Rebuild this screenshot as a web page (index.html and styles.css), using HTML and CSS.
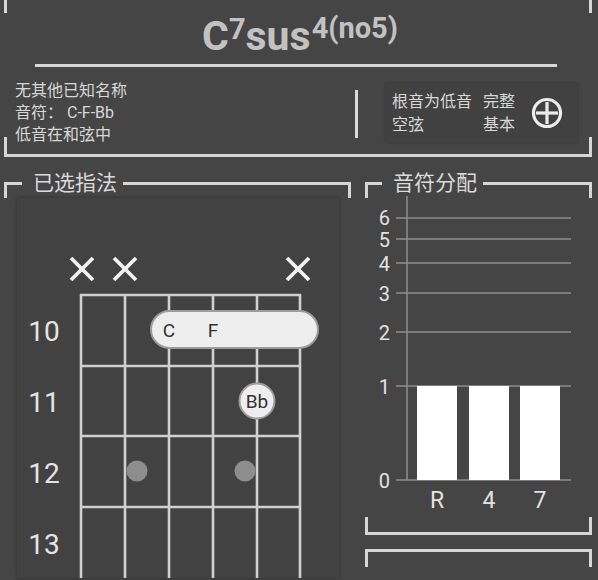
FILE: index.html
```html
<!DOCTYPE html>
<html lang="zh">
<head>
<meta charset="utf-8">
<link rel="stylesheet" href="styles.css">
</head>
<body>
<div class="stubs"></div>
<h1 class="title">C<sup class="sup7">7</sup>sus<sup class="sup4">4(no5)</sup></h1>
<div class="rule"></div>
<section class="info">
  <div class="info-text">
    <div>无其他已知名称</div>
    <div>音符： C-F-Bb</div>
    <div>低音在和弦中</div>
  </div>
  <div class="divider"></div>
  <div class="tags">
    <div class="tag-grid">
      <span>根音为低音</span><span>完整</span>
      <span>空弦</span><span>基本</span>
    </div>
    <svg class="plus" width="32" height="32" viewBox="0 0 32 32">
      <circle cx="16" cy="16" r="13.5" fill="none" stroke="#ececec" stroke-width="3.2"/>
      <line x1="5" y1="16" x2="27" y2="16" stroke="#ececec" stroke-width="3.2"/>
      <line x1="16" y1="5" x2="16" y2="27" stroke="#ececec" stroke-width="3.2"/>
    </svg>
  </div>
</section>
<div class="columns">
  <section class="col col-left">
    <div class="head">
      <div class="corner"></div>
      <span class="head-text">已选指法</span>
      <div class="head-line"></div>
    </div>
    <div class="board">
      <svg width="322" height="380" viewBox="17 200 322 380">
        <g stroke="#f2f2f2" stroke-width="3.8">
          <line x1="71" y1="260" x2="93" y2="282"/><line x1="93" y1="260" x2="71" y2="282"/>
          <line x1="114" y1="260" x2="136" y2="282"/><line x1="136" y1="260" x2="114" y2="282"/>
          <line x1="287" y1="260" x2="309" y2="282"/><line x1="309" y1="260" x2="287" y2="282"/>
        </g>
        <g stroke="#d0d0d0" stroke-width="2.6">
          <line x1="81" y1="296" x2="81" y2="590"/>
          <line x1="125" y1="296" x2="125" y2="590"/>
          <line x1="169" y1="296" x2="169" y2="590"/>
          <line x1="213" y1="296" x2="213" y2="590"/>
          <line x1="257" y1="296" x2="257" y2="590"/>
          <line x1="300" y1="296" x2="300" y2="590"/>
          <line x1="80" y1="297" x2="301" y2="297"/>
          <line x1="80" y1="368" x2="301" y2="368"/>
          <line x1="80" y1="438" x2="301" y2="438"/>
          <line x1="80" y1="509" x2="301" y2="509"/>
        </g>
        <g class="fretnum" fill="#e4e4e4" text-anchor="middle">
          <text x="44" y="343">10</text>
          <text x="44" y="414">11</text>
          <text x="44" y="485">12</text>
          <text x="44" y="556">13</text>
        </g>
        <circle cx="137" cy="473" r="10.5" fill="#8d8d8d"/>
        <circle cx="245" cy="473" r="10.5" fill="#8d8d8d"/>
        <rect x="151" y="313" width="167" height="37" rx="18.5" fill="#eeeeee" stroke="#9c9c9c" stroke-width="2"/>
        <circle cx="257" cy="403" r="17.5" fill="#eeeeee" stroke="#9c9c9c" stroke-width="2"/>
        <g class="note" fill="#333333" text-anchor="middle">
          <text x="169" y="339">C</text>
          <text x="213" y="339">F</text>
          <text x="257" y="410">Bb</text>
        </g>
      </svg>
    </div>
  </section>
  <section class="col col-right">
    <div class="head">
      <div class="corner"></div>
      <span class="head-text">音符分配</span>
      <div class="head-line"></div>
    </div>
    <svg class="chart" width="227" height="317" viewBox="365 198 227 317">
      <g stroke="#8e8e8e" stroke-width="1.5">
        <line x1="407" y1="198" x2="407" y2="482"/>
        <line x1="396" y1="220" x2="571" y2="220"/>
        <line x1="396" y1="241" x2="571" y2="241"/>
        <line x1="396" y1="265" x2="571" y2="265"/>
        <line x1="396" y1="295" x2="571" y2="295"/>
        <line x1="396" y1="334" x2="571" y2="334"/>
        <line x1="396" y1="388" x2="571" y2="388"/>
        <line x1="396" y1="482" x2="571" y2="482"/>
      </g>
      <g class="axis" fill="#e2e2e2" text-anchor="end">
        <text x="390" y="227">6</text>
        <text x="390" y="249">5</text>
        <text x="390" y="273">4</text>
        <text x="390" y="303">3</text>
        <text x="390" y="342">2</text>
        <text x="390" y="396">1</text>
        <text x="390" y="490">0</text>
      </g>
      <rect x="417" y="388" width="40" height="94" fill="#ffffff"/>
      <rect x="469" y="388" width="40" height="94" fill="#ffffff"/>
      <rect x="520" y="388" width="40" height="94" fill="#ffffff"/>
      <g class="xlab" fill="#e2e2e2" text-anchor="middle">
        <text x="437" y="510">R</text>
        <text x="489" y="510">4</text>
        <text x="540" y="510">7</text>
      </g>
    </svg>
    <div class="bracket-bottom"></div>
    <div class="bracket-top"></div>
  </section>
</div>
</body>
</html>
```
FILE: styles.css
```css
html, body {
  margin: 0;
  padding: 0;
}
body {
  width: 598px;
  height: 580px;
  overflow: hidden;
  background: #454545;
  color: #d8d8d8;
  font-family: Roboto, "Noto Sans CJK SC", sans-serif;
}
.stubs {
  height: 13px;
  margin: 0 6px 0 4px;
  border-left: 3px solid #d6d6d6;
  border-right: 3px solid #d6d6d6;
}
.title {
  margin: 0;
  height: 51px;
  line-height: 46px;
  text-align: center;
  font-size: 41px;
  font-weight: 700;
  color: #c2c2c2;
  padding-left: 2px;
  white-space: nowrap;
}
.title sup {
  font-size: 29px;
  line-height: 0;
}
.sup7 { vertical-align: 11px; }
.sup4 { vertical-align: 12px; margin-left: 1px; }
.rule {
  height: 3px;
  margin: 0 41px 0 35px;
  background: #d8d8d8;
}
.info {
  position: relative;
  height: 90px;
  margin: 0 6px 0 4px;
  display: flex;
  align-items: flex-start;
  box-sizing: border-box;
  padding: 0 14px 0 11px;
}
.info::after {
  content: "";
  position: absolute;
  left: 0;
  right: 0;
  bottom: 0;
  height: 17px;
  border: 3px solid #d6d6d6;
  border-top: none;
}
.info-text {
  flex: 1;
  padding-top: 13px;
  font-size: 16px;
  line-height: 22px;
  color: #d8d8d8;
}
.divider {
  width: 3px;
  height: 48px;
  margin-top: 23px;
  background: #dcdcdc;
}
.tags {
  margin-top: 16px;
  margin-left: 27px;
  width: 193px;
  height: 60px;
  box-sizing: border-box;
  padding-left: 7px;
  display: flex;
  align-items: center;
  background: #414141;
  box-shadow: 0 0 2px rgba(0,0,0,0.35);
  border-radius: 2px;
}
.tag-grid {
  display: grid;
  grid-template-columns: 80px 32px;
  column-gap: 11px;
  font-size: 16px;
  line-height: 23px;
  color: #d8d8d8;
}
.plus {
  margin-left: 16px;
}
.columns {
  display: flex;
  margin: 0 6px 0 4px;
  gap: 14px;
}
.col-left { width: 347px; }
.col-right { flex: 1; }
.head {
  display: flex;
  align-items: flex-start;
  height: 28px;
  margin-top: 13px;
}
.corner {
  width: 18px;
  height: 16px;
  margin-top: 12px;
  box-sizing: border-box;
  border-top: 3px solid #d6d6d6;
  border-left: 3px solid #d6d6d6;
}
.col-right .corner { width: 17px; }
.head-text {
  margin: 0 6px 0 11px;
  font-size: 21px;
  line-height: 27px;
  color: #dadada;
}
.head-line {
  flex: 1;
  height: 16px;
  margin-top: 12px;
  box-sizing: border-box;
  border-top: 3px solid #d6d6d6;
  border-right: 3px solid #d6d6d6;
}
.board {
  margin: 0 12px 0 13px;
  height: 380px;
  background: #424242;
  box-shadow: 0 0 3px rgba(0,0,0,0.35);
}
.board svg, .chart { display: block; }
.fretnum text {
  font-family: Roboto, sans-serif;
  font-size: 28px;
}
.note text {
  font-family: Roboto, sans-serif;
  font-size: 19px;
}
.axis text {
  font-family: Roboto, sans-serif;
  font-size: 20px;
}
.xlab text {
  font-family: Roboto, sans-serif;
  font-size: 23px;
}
.chart { margin-top: -2px; }
.bracket-bottom {
  margin-top: 4px;
  height: 18px;
  box-sizing: border-box;
  border: 3px solid #d6d6d6;
  border-top: none;
}
.bracket-top {
  margin-top: 14px;
  height: 18px;
  box-sizing: border-box;
  border: 3px solid #d6d6d6;
  border-bottom: none;
}
```
